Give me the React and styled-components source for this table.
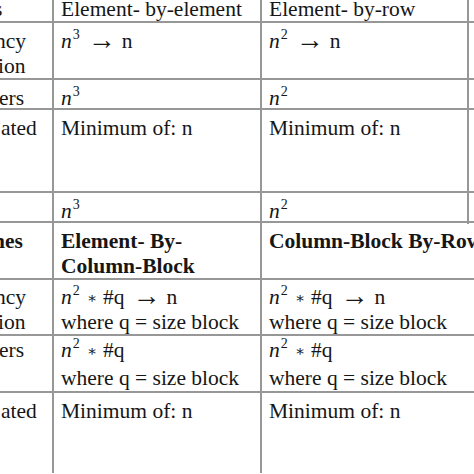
import React from 'react';
import styled, { createGlobalStyle } from 'styled-components';

const GlobalStyle = createGlobalStyle`
  html, body {
    margin: 0;
    padding: 0;
    background: #ffffff;
  }
  body {
    font-family: "Liberation Serif", "DejaVu Serif", serif;
    color: #161616;
  }
`;

const TOP_COLS = '54px 208px 207px 1fr';
const BOTTOM_COLS = '54px 208px 1fr';

// stub column: the table is cut on the left, so only word ends show
const rows = [
  { h: 33, cols: TOP_COLS, pad: 7, stub: [['s', -6]], cells: [['Element- by-element'], ['Element- by-row'], []] },
  {
    h: 57,
    cols: TOP_COLS,
    stub: [['ncy', -5], ['ion', -2]],
    cells: [[['n', '3', '→', 'n']], [['n', '2', '→', 'n']], []],
  },
  { h: 30, cols: TOP_COLS, stub: [['ers', -1]], cells: [[['n', '3']], [['n', '2']], []] },
  { h: 83, cols: TOP_COLS, stub: [['ated', 1]], cells: [['Minimum of: n'], ['Minimum of: n'], []] },
  { h: 30, cols: TOP_COLS, stub: [], cells: [[['n', '3']], [['n', '2']], []] },
  {
    h: 57,
    cols: BOTTOM_COLS,
    bold: true,
    stub: [['nes', -7]],
    cells: [['Element- By-', 'Column-Block'], ['Column-Block By-Row']],
  },
  {
    h: 56,
    cols: BOTTOM_COLS,
    pad: 5,
    stub: [['ncy', -5], ['ion', -2]],
    cells: [
      [['n', '2', '∗', '#q', '→', 'n'], 'where q = size block'],
      [['n', '2', '∗', '#q', '→', 'n'], 'where q = size block'],
    ],
  },
  {
    h: 57,
    cols: BOTTOM_COLS,
    pad: 2,
    gap: 3,
    stub: [['ers', -1]],
    cells: [
      [['n', '2', '∗', '#q'], 'where q = size block'],
      [['n', '2', '∗', '#q'], 'where q = size block'],
    ],
  },
  { h: 80, cols: BOTTOM_COLS, last: true, stub: [['ated', 1]], cells: [['Minimum of: n'], ['Minimum of: n']] },
];

// a formula line: italic base, raised power, then the rest of the terms
function Content({ line }) {
  if (typeof line === 'string') return line;
  const [base, power, ...rest] = line;
  return (
    <>
      <Var>{base}</Var>
      <Sup>{power}</Sup>
      {rest.map((part, i) => {
        if (part === '→') return <Arrow key={i}>→</Arrow>;
        if (part === '∗') return <Star key={i}>∗</Star>;
        return <span key={i}>{part}</span>;
      })}
    </>
  );
}

export default function App() {
  return (
    <>
      <GlobalStyle />
      <Page>
        <Table>
          {rows.map((row, i) => (
            <Row key={i} $cols={row.cols} $h={row.h} $last={row.last} $bold={row.bold}>
              <Stub $pad={row.pad ?? 6}>
                {row.stub.map(([text, shift], j) => (
                  <Line key={j} $shift={shift}>
                    {text}
                  </Line>
                ))}
              </Stub>
              {row.cells.map((lines, k) => (
                <Cell key={k} $pad={row.pad ?? 6} $open={k === row.cells.length - 1 && !lines.length}>
                  {lines.map((line, j) => (
                    <Line key={j} $gap={j > 0 ? row.gap || 0 : 0}>
                      <Content line={line} />
                    </Line>
                  ))}
                </Cell>
              ))}
            </Row>
          ))}
        </Table>
      </Page>
    </>
  );
}

const Page = styled.div`
  width: 474px;
  height: 474px;
  overflow: hidden;
`;

const Table = styled.div`
  width: 640px;
  margin-top: -10px;
  font-size: 21.5px;
`;

const Row = styled.div`
  display: grid;
  grid-template-columns: ${(p) => p.$cols};
  height: ${(p) => p.$h}px;
  box-sizing: border-box;
  border-bottom: ${(p) => (p.$last ? 'none' : '2px solid #979797')};
  font-weight: ${(p) => (p.$bold ? 700 : 400)};
`;

const Cell = styled.div`
  box-sizing: border-box;
  padding: ${(p) => p.$pad}px 7px 0;
  border-right: ${(p) => (p.$open ? 'none' : '2px solid #979797')};
  white-space: nowrap;
`;

const Stub = styled.div`
  box-sizing: border-box;
  padding-top: ${(p) => p.$pad}px;
  border-right: 2px solid #979797;
  overflow: hidden;
  white-space: nowrap;
`;

const Line = styled.div`
  line-height: 25px;
  margin-top: ${(p) => p.$gap || 0}px;
  text-indent: ${(p) => p.$shift || 0}px;
`;

const Var = styled.i`
  font-style: italic;
`;

const Sup = styled.span`
  vertical-align: 9px;
  font-size: 14px;
  line-height: 0;
  margin-left: 1px;
`;

const Arrow = styled.span`
  vertical-align: -1px;
  font-size: 28px;
  line-height: 0;
  margin: 0 6px 0 8px;
`;

const Star = styled.span`
  vertical-align: 1px;
  font-family: "DejaVu Serif", serif;
  font-size: 15px;
  line-height: 0;
  margin: 0 6px 0 7px;
`;
